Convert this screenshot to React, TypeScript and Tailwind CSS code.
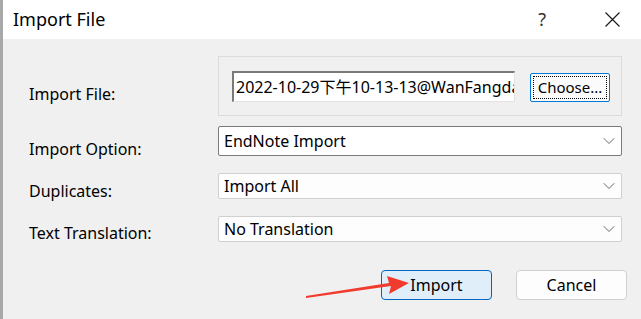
import React from "react";
import { ChevronDown } from "lucide-react";

const font = { fontFamily: '"Noto Sans", "Noto Sans CJK SC", sans-serif' };

const Select = ({ value, active }: { value: string; active?: boolean }) => (
  <div
    className={`flex items-center justify-between h-full pl-[5px] pr-[2px] border text-[16px] text-black ${
      active ? "bg-white border-[#7a7a7a]" : "bg-[#fdfdfd] border-[#d0d0d0]"
    } rounded-[2px]`}
  >
    <span>{value}</span>
    <ChevronDown className="w-[20px] h-[20px] text-[#5a5a5a]" strokeWidth={1.1} />
  </div>
);

export default function App() {
  return (
    <div className="relative flex w-[641px] h-[319px] overflow-hidden" style={font}>
      {/* window behind */}
      <div className="w-[3px] h-full bg-[#a8a8a8]" />

      <div className="flex flex-col flex-1">
        {/* Title bar */}
        <div className="flex items-center h-[39px] bg-white">
          <span className="ml-[10px] text-[18px] text-black">Import File</span>
          <span className="ml-auto text-[18px] text-[#333] mr-[59px]">?</span>
          <svg width="15" height="15" viewBox="0 0 15 15" className="mr-[21px]">
            <path d="M0.5 0.5 L14.5 14.5 M14.5 0.5 L0.5 14.5" stroke="#1a1a1a" strokeWidth="1.2" />
          </svg>
        </div>

        {/* Body */}
        <div className="flex-1 bg-[#f0f0f0] pt-[17px] text-[16px] text-black">
          {/* Import File row */}
          <div className="flex h-[60px]">
            <div className="w-[215px] pl-[26px] pt-[26px]">Import File:</div>
            <div className="w-[404px] border border-[#dcdcdc] flex items-center pl-[13px] pr-[11px]">
              <div className="w-[283px] h-[31px] bg-white border-t-2 border-l-2 border-t-[#7a7a7a] border-l-[#7a7a7a] border-b border-r border-b-[#e3e3e3] border-r-[#e3e3e3] overflow-hidden whitespace-nowrap pl-[2px] leading-[28px]">
                2022-10-29下午10-13-13@WanFangdata
              </div>
              <button className="ml-auto w-[80px] h-[29px] mt-[2px] bg-[#fbfbfb] border border-[#0078d7] rounded-[2px] p-[2px]">
                <div className="h-full border border-dotted border-black flex items-center justify-center leading-none text-[15px] whitespace-nowrap">
                  Choose...
                </div>
              </button>
            </div>
          </div>

          {/* Import Option */}
          <div className="flex h-[30px] mt-[10px]">
            <div className="w-[215px] pl-[26px] pt-[11px]">Import Option:</div>
            <div className="w-[404px]">
              <Select value="EndNote Import" active />
            </div>
          </div>

          {/* Duplicates */}
          <div className="flex h-[26px] mt-[17px]">
            <div className="w-[215px] pl-[26px] pt-[6px]">Duplicates:</div>
            <div className="w-[404px]">
              <Select value="Import All" />
            </div>
          </div>

          {/* Text Translation */}
          <div className="flex h-[26px] mt-[17px]">
            <div className="w-[215px] pl-[26px] pt-[5px]">Text Translation:</div>
            <div className="w-[404px]">
              <Select value="No Translation" />
            </div>
          </div>

          {/* Buttons */}
          <div className="flex justify-end gap-[24px] mt-[28px] mr-[14px]">
            <button className="w-[111px] h-[30px] bg-[#e0eef9] border border-[#0067c0] rounded-[4px] text-[16px]">
              Import
            </button>
            <button className="w-[111px] h-[30px] bg-[#fdfdfd] border border-[#d0d0d0] rounded-[4px] text-[16px]">
              Cancel
            </button>
          </div>
        </div>
      </div>

      {/* annotation arrow */}
      <svg className="absolute left-0 top-0 pointer-events-none" width="641" height="319">
        <polygon points="306,298 391,286 389,294 409,283 387,276 389,283 306,296" fill="#f23b2f" />
      </svg>
    </div>
  );
}
